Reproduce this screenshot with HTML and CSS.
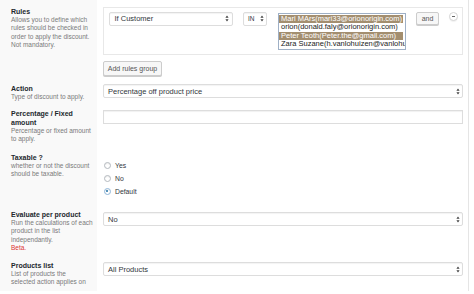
FILE: index.html
```html
<!DOCTYPE html>
<html>
<head>
<meta charset="utf-8">
<link rel="stylesheet" href="styles.css">
</head>
<body>
<div class="form">
  <div class="th th-first">
    <div class="label">Rules</div>
    <div class="desc">Allows you to define which rules should be checked in order to apply the discount. Not mandatory.</div>
  </div>
  <div class="td td-rules">
    <div class="rules-box">
      <div class="select sel-cond"><span>If Customer</span><svg class="arrows" width="4" height="7" viewBox="0 0 4 7"><path d="M2 0.6L3.6 2.7H0.4Z M2 6.4L3.6 4.3H0.4Z" fill="#444"/></svg></div>
      <div class="select sel-op"><span>IN</span><svg class="arrows" width="4" height="7" viewBox="0 0 4 7"><path d="M2 0.6L3.6 2.7H0.4Z M2 6.4L3.6 4.3H0.4Z" fill="#444"/></svg></div>
      <div class="listbox">
        <div class="opt on">Mari MArs(mari33@orionorigin.com)</div>
        <div class="opt">orion(donald.faly@orionorigin.com)</div>
        <div class="opt on">Peter Teoth(Peter.the@gmail.com)</div>
        <div class="opt">Zara Suzane(h.vanlohuizen@vanlohuizen.nl)</div>
      </div>
      <div class="btn btn-and">and</div>
      <div class="remove"><span class="dash"></span></div>
    </div>
    <div class="btn btn-add">Add rules group</div>
  </div>

  <div class="th">
    <div class="label">Action</div>
    <div class="desc">Type of discount to apply.</div>
  </div>
  <div class="td td-action">
    <div class="select sel-full"><span>Percentage off product price</span><svg class="arrows" width="4" height="7" viewBox="0 0 4 7"><path d="M2 0.6L3.6 2.7H0.4Z M2 6.4L3.6 4.3H0.4Z" fill="#444"/></svg></div>
  </div>

  <div class="th">
    <div class="label">Percentage / Fixed amount</div>
    <div class="desc">Percentage or fixed amount to apply.</div>
  </div>
  <div class="td td-amount">
    <div class="input"></div>
  </div>

  <div class="th">
    <div class="label">Taxable ?</div>
    <div class="desc">whether or not the discount should be taxable.</div>
  </div>
  <div class="td td-tax">
    <div class="radio-row"><span class="radio"></span><span>Yes</span></div>
    <div class="radio-row"><span class="radio"></span><span>No</span></div>
    <div class="radio-row"><span class="radio checked"></span><span>Default</span></div>
  </div>

  <div class="th">
    <div class="label">Evaluate per product</div>
    <div class="desc">Run the calculations of each product in the list independantly.<br><span class="beta">Beta.</span></div>
  </div>
  <div class="td td-eval">
    <div class="select sel-full"><span>No</span><svg class="arrows" width="4" height="7" viewBox="0 0 4 7"><path d="M2 0.6L3.6 2.7H0.4Z M2 6.4L3.6 4.3H0.4Z" fill="#444"/></svg></div>
  </div>

  <div class="th">
    <div class="label">Products list</div>
    <div class="desc">List of products the<br>selected action applies on</div>
  </div>
  <div class="td td-products">
    <div class="select sel-full"><span>All Products</span><svg class="arrows" width="4" height="7" viewBox="0 0 4 7"><path d="M2 0.6L3.6 2.7H0.4Z M2 6.4L3.6 4.3H0.4Z" fill="#444"/></svg></div>
  </div>
</div>
</body>
</html>
```

FILE: styles.css
```css
html, body {
  margin: 0;
  padding: 0;
  background: #ffffff;
}
body {
  font-family: "Liberation Sans", Arial, sans-serif;
  color: #32373c;
}
.form {
  display: grid;
  grid-template-columns: 97px 371px;
  grid-template-rows: 79.5px 25px 44px 57px 51px 34px;
  width: 468px;
  border-right: 1px solid #e5e5e5;
  background: #fff;
}
.th {
  background: #f9f9f9;
  padding: 4px 2px 0 11px;
}
.th-first {
  padding-top: 6.5px;
}
.label {
  font-size: 7px;
  line-height: 9px;
  font-weight: bold;
  color: #23282d;
}
.desc {
  font-size: 6.5px;
  line-height: 8.5px;
  color: #7a7a7a;
}
.beta {
  color: #dc3232;
}
.td {
  padding: 0 5px 0 6px;
  font-size: 7.5px;
}
.td-rules { padding-top: 7px; }
.td-action { padding-top: 4.5px; }
.td-amount { padding-top: 5.5px; }
.td-tax { padding-top: 10px; }
.td-eval { padding-top: 6.5px; }
.td-products { padding-top: 5.5px; }

.rules-box {
  box-sizing: border-box;
  height: 48px;
  border: 1px solid #e8e8e8;
  padding: 4px 4.5px 0 5px;
  display: flex;
  align-items: flex-start;
}
.select {
  box-sizing: border-box;
  height: 14px;
  border: 1px solid #dddddd;
  border-radius: 2px;
  background: #fff;
  box-shadow: inset 0 1px 1px rgba(0,0,0,0.05);
  display: flex;
  align-items: center;
  justify-content: space-between;
  padding: 0 2px 0 4px;
  color: #32373c;
  font-size: 7.5px;
  white-space: nowrap;
}
.sel-cond {
  width: 124px;
  height: 13.5px;
  padding-left: 4.5px;
  padding-right: 3px;
  margin-right: 10px;
}
.sel-op {
  width: 24px;
  height: 13.5px;
  padding-left: 4px;
  padding-right: 2px;
  margin-right: 11px;
  font-size: 6.5px;
}
.sel-full {
  width: 360px;
}
.arrows {
  flex: none;
}
.listbox {
  box-sizing: border-box;
  width: 128px;
  height: 37px;
  margin-top: 1px;
  margin-right: 10px;
  border: 1px solid #9fb0c6;
  background: #fff;
  overflow: hidden;
  padding: 0.5px 0;
  font-size: 7.5px;
  color: #222;
}
.opt {
  height: 8.5px;
  line-height: 8.5px;
  padding-left: 2px;
  margin-right: 2px;
  white-space: nowrap;
}
.opt.on {
  background: #a38e6f;
  color: #fff;
}
.btn {
  box-sizing: border-box;
  border: 1px solid #cccccc;
  border-radius: 2px;
  background: #f7f7f7;
  box-shadow: 0 1px 0 #cccccc;
  color: #555;
  font-size: 7px;
  display: flex;
  align-items: center;
  justify-content: center;
  white-space: nowrap;
}
.btn-and {
  width: 23px;
  height: 13px;
}
.btn-add {
  width: 59px;
  height: 15px;
  margin-top: 6px;
}
.remove {
  box-sizing: border-box;
  width: 9px;
  height: 9px;
  margin-left: auto;
  margin-top: -0.5px;
  border: 1px solid #d5d5d5;
  border-radius: 50%;
  background: #fff;
  box-shadow: 0 1px 1px rgba(0,0,0,0.06);
  display: flex;
  align-items: center;
  justify-content: center;
}
.dash {
  width: 3px;
  height: 1px;
  background: #666;
}
.input {
  box-sizing: border-box;
  width: 360px;
  height: 14px;
  border: 1px solid #dddddd;
  background: #fff;
  box-shadow: inset 0 1px 1px rgba(0,0,0,0.06);
}
.radio-row {
  display: flex;
  align-items: center;
  height: 13px;
  gap: 4.5px;
  font-size: 6.8px;
  color: #32373c;
}
.radio {
  box-sizing: border-box;
  width: 7px;
  height: 7px;
  margin-left: 0.5px;
  border: 1px solid #b4b9be;
  border-radius: 50%;
  background: #fff;
  box-shadow: inset 0 1px 1px rgba(0,0,0,0.08);
  display: flex;
  align-items: center;
  justify-content: center;
}
.radio.checked {
  border-color: #8fb6d9;
}
.radio.checked::after {
  content: "";
  width: 2.5px;
  height: 2.5px;
  border-radius: 50%;
  background: #1e6fa5;
}
```
